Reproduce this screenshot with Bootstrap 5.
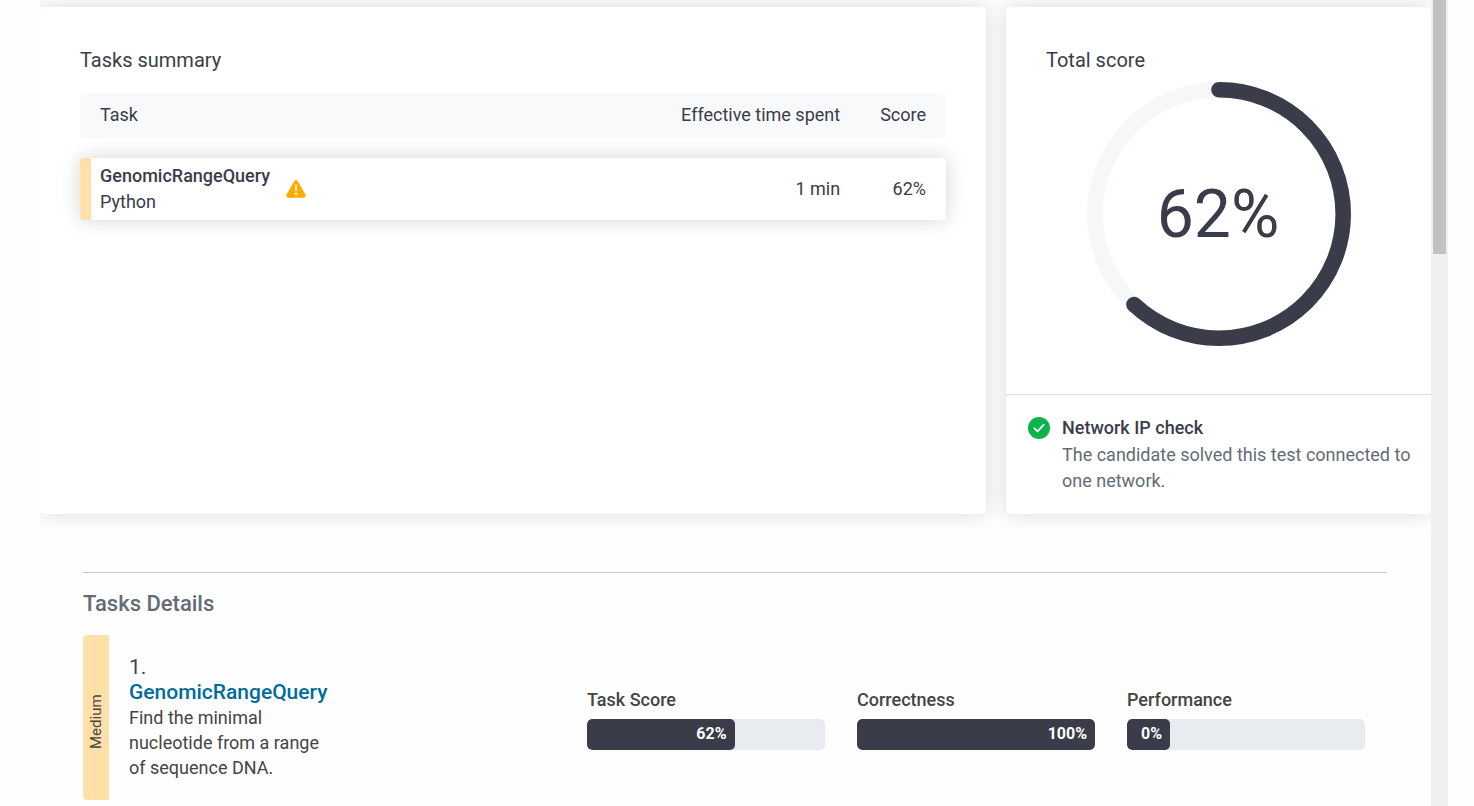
<!DOCTYPE html>
<html lang="en">
<head>
<meta charset="utf-8">
<meta name="viewport" content="width=device-width, initial-scale=1">
<title>Test report</title>
<link href="https://cdn.jsdelivr.net/npm/bootstrap@5.3.0/dist/css/bootstrap.min.css" rel="stylesheet">
<style>
  :root { --ink: #3a3c4a; --muted: #636c75; --medium: #ffe0a8; --track: #e8ebf0; }
  body { font-family: Roboto, "Liberation Sans", sans-serif; font-size: 18px; line-height: 26px; color: var(--ink); background: #fefefe; }
  .page-main { padding-left: 40px; min-width: 0; }
  .summary { display: grid; grid-template-columns: 946fr 425fr; gap: 20px; padding: 7px 0 58px; overflow: hidden; }
  .panel { background: #fff; border-radius: 4px; box-shadow: 0 0 20px rgba(0, 0, 0, .14); }
  .panel-body { padding: 40px; }
  .panel-title { font-size: 20px; line-height: 26px; font-weight: 400; margin: 0; }
  .fw-mid { font-weight: 500; }

  .task-table { width: 100%; border-collapse: separate; border-spacing: 0 20px; }
  .task-table th { font-weight: 400; background: #f8f9fb; height: 45px; padding: 0 0 2px; }
  .task-table th:first-child { padding-left: 20px; border-top-left-radius: 4px; }
  .task-table th:last-child { border-top-right-radius: 4px; }
  .task-table td { background: #fff; padding: 5px 0; }
  .task-table td:first-child { border-left: 11px solid var(--medium); padding-left: 9px; border-radius: 4px 0 0 4px; }
  .task-table td:last-child { border-radius: 0 4px 4px 0; }
  .task-table tbody tr { box-shadow: 0 0 20px rgba(0, 0, 0, .17); border-radius: 4px; }
  .task-table .num { text-align: right; padding-right: 20px; white-space: nowrap; }
  .task-table .num + .num { padding-left: 20px; width: 1px; }

  .ring { display: block; width: 264px; margin: 9px auto 8px; }
  .check-row { border-top: 1px solid #d5dde3; padding: 20px 20px 20px 22px; gap: 12px; }
  .check-row svg { margin-top: 2px; }
  .check-row p { color: var(--muted); margin: 1px 0 0; }

  .details { padding: 0 44px 0 43px; }
  .details-head { border-top: 1px solid #c8c9cb; padding: 18px 0; }
  .details-head h2 { font-size: 22px; line-height: 26px; font-weight: 500; color: var(--muted); margin: 0; }
  .task-item { display: grid; grid-template-columns: 26px 478fr 800fr; color: #444; }
  .level { background: var(--medium); border-radius: 0 4px 4px 0; writing-mode: vertical-rl; transform: rotate(180deg); font-size: 15px; padding-bottom: 8px; }
  .task-text { padding: 20px; line-height: 25px; }
  .task-text h3 { font-size: 21px; line-height: 25px; font-weight: 400; margin: 0; }
  .task-text a { color: #006c9e; font-weight: 500; text-decoration: none; }
  .task-text p { max-width: 210px; }
  .scores { display: grid; grid-template-columns: repeat(3, 1fr); gap: 32px; padding-right: 22px; }
  .score-label { line-height: 30px; font-weight: 500; margin-bottom: 4px; }
  .progress { --bs-progress-height: 31px; --bs-progress-bg: var(--track); --bs-progress-border-radius: 5px; --bs-progress-font-size: 16px; }
  .progress-bar { background: var(--ink); min-width: 43px; border-radius: 5px; padding: 0 8px 2px; text-align: right; font-weight: 700; }

  .scroll-rail { width: 17px; margin-right: 26px; padding: 0 2px; background: #f0f0f0; }
  .scroll-thumb { height: 254px; background: #c1c1c1; }
</style>
</head>
<body>
<div class="d-flex min-vh-100">
  <main class="page-main flex-grow-1">
    <div class="summary">
      <section class="panel">
        <div class="panel-body">
          <h2 class="panel-title">Tasks summary</h2>
          <table class="task-table">
            <thead>
              <tr><th scope="col">Task</th><th scope="col" class="num">Effective time spent</th><th scope="col" class="num">Score</th></tr>
            </thead>
            <tbody>
              <tr>
                <td>
                  <div class="d-flex align-items-center gap-3">
                    <div><div class="fw-mid">GenomicRangeQuery</div><div>Python</div></div>
                    <svg width="20" height="18" viewBox="0 0 20 18" role="img" aria-label="Warning">
                      <path d="M10 2.6 2.7 15.4h14.6z" fill="#ffab00" stroke="#ffab00" stroke-width="4.6" stroke-linejoin="round"/>
                      <path d="M10 5.2v5.4" stroke="#fff" stroke-width="1.5" stroke-linecap="round"/>
                      <circle cx="10" cy="13.8" r="1.2" fill="#fff"/>
                    </svg>
                  </div>
                </td>
                <td class="num">1 min</td>
                <td class="num">62%</td>
              </tr>
            </tbody>
          </table>
        </div>
      </section>
      <section class="panel">
        <div class="panel-body">
          <h2 class="panel-title">Total score</h2>
          <svg class="ring" viewBox="0 0 264 264" role="img" aria-label="Total score 62%">
            <g fill="none" stroke-width="15.6" transform="rotate(-90 132 132)">
              <circle cx="132" cy="132" r="124.2" stroke="#f6f7f9"/>
              <circle cx="132" cy="132" r="124.2" stroke="#3a3c4a" stroke-linecap="round" pathLength="100" stroke-dasharray="62 100"/>
            </g>
            <text x="131" y="155" text-anchor="middle" font-size="66" fill="#3a3c4a">62%</text>
          </svg>
        </div>
        <div class="check-row d-flex">
          <svg class="flex-shrink-0" width="22" height="22" viewBox="0 0 22 22" aria-hidden="true">
            <circle cx="11" cy="11" r="11" fill="#0ab44b"/>
            <path d="m6.4 11.3 3.1 3 6.1-6.4" fill="none" stroke="#fff" stroke-width="1.8" stroke-linecap="round" stroke-linejoin="round"/>
          </svg>
          <div>
            <div class="fw-mid">Network IP check</div>
            <p>The candidate solved this test connected to one network.</p>
          </div>
        </div>
      </section>
    </div>

    <section class="details">
      <div class="details-head"><h2>Tasks Details</h2></div>
      <article class="task-item">
        <div class="level d-flex align-items-center justify-content-center">Medium</div>
        <div class="task-text">
          <h3>1.<br><a href="#">GenomicRangeQuery</a></h3>
          <p class="mb-0">Find the minimal nucleotide from a range of sequence DNA.</p>
        </div>
        <div class="scores align-items-center">
          <div>
            <div class="score-label" id="s1">Task Score</div>
            <div class="progress" role="progressbar" aria-labelledby="s1" aria-valuenow="62"><div class="progress-bar" style="width:62%">62%</div></div>
          </div>
          <div>
            <div class="score-label" id="s2">Correctness</div>
            <div class="progress" role="progressbar" aria-labelledby="s2" aria-valuenow="100"><div class="progress-bar" style="width:100%">100%</div></div>
          </div>
          <div>
            <div class="score-label" id="s3">Performance</div>
            <div class="progress" role="progressbar" aria-labelledby="s3" aria-valuenow="0"><div class="progress-bar" style="width:0%">0%</div></div>
          </div>
        </div>
      </article>
    </section>
  </main>
  <div class="scroll-rail flex-shrink-0" aria-hidden="true"><div class="scroll-thumb"></div></div>
</div>
<script src="https://cdn.jsdelivr.net/npm/bootstrap@5.3.0/dist/js/bootstrap.bundle.min.js"></script>
</body>
</html>
